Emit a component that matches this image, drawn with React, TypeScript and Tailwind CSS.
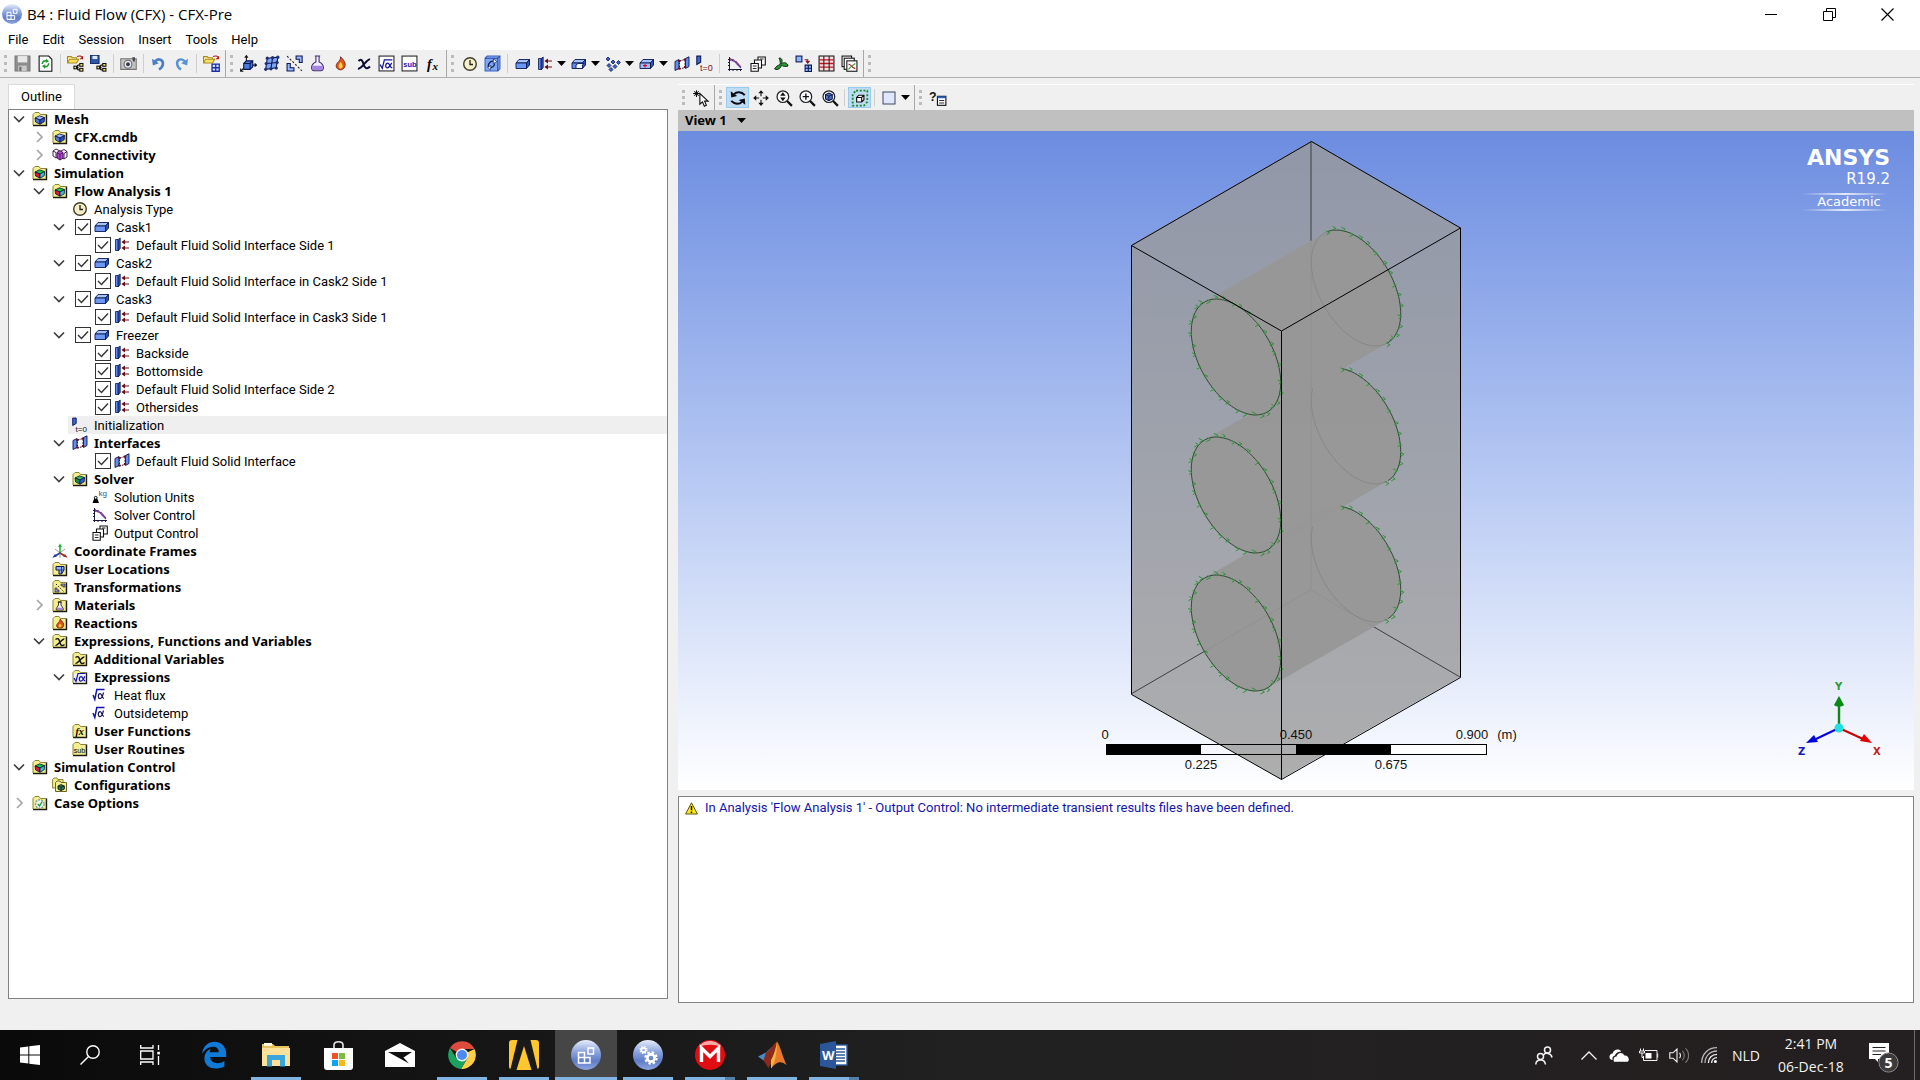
import React from 'react';

type IconFn = () => React.ReactElement;

const NAVY = '#0a1650';

interface GlyphProps {
  size?: number;
  children: React.ReactNode;
}

const Glyph: React.FC<GlyphProps> = ({ size = 16, children }) => (
  <svg width={size} height={size} viewBox="0 0 16 16" fill="none" className="shrink-0" aria-hidden="true">
    {children}
  </svg>
);

/* ---------- shared icon parts ---------- */

const Folder: React.FC<{ children?: React.ReactNode }> = ({ children }) => (
  <Glyph>
    <path d="M1 3.5 L3 1.5 H7 L8.5 3.5 H14 V14 H1 Z" fill="#f4ee8e" stroke="#8b8536" />
    <path d="M1 14.6 H14.6 V3.5" stroke="#1c1c10" strokeWidth="1.2" />
    {children}
  </Glyph>
);

const Cube: React.FC<{ top: string; left: string; right: string }> = ({ top, left, right }) => (
  <g stroke="#08104a" strokeWidth=".8" strokeLinejoin="round">
    <path d="M3 7 L7.5 4.8 L12.5 6.6 L8 9 Z" fill={top} />
    <path d="M3 7 L8 9 V13.2 L3.6 11 Z" fill={left} />
    <path d="M12.5 6.6 L8 9 V13.2 L12.2 10.8 Z" fill={right} />
  </g>
);

const OpenFolder = () => (
  <g>
    <path d="M.5 7.5 V1.5 H4 L5 2.5 H9 V4" fill="#fff3a0" stroke="#a88a20" />
    <path d="M.5 7.5 L2.5 4 H11 L9 7.5 Z" fill="#ffe45c" stroke="#a88a20" />
    <path d="M9.5 1.5 C12 .3 13.5 1 14.2 3 M14.6 1.2 V3.6 H12.2" stroke="#b01818" />
  </g>
);

const TreeNodes = () => (
  <g stroke="#111" strokeWidth="1">
    <path d="M8 12 H11 M10 9.5 V14 M10 9.5 H12 M10 14 H12" />
    <rect x="6.5" y="10.5" width="2.5" height="2.5" fill="#f3e36a" />
    <rect x="12" y="8" width="3" height="2.6" fill="#f3e36a" />
    <rect x="12" y="12.6" width="3" height="2.6" fill="#f3e36a" />
  </g>
);

/* ---------- tree and toolbar icons ---------- */

const MeshFolder: IconFn = () => <Folder><Cube top="#9db8ff" left="#5378e0" right="#2f4fb4" /></Folder>;
const SimFolder: IconFn = () => <Folder><Cube top="#1fc83a" left="#d8183c" right="#35c9c4" /></Folder>;
const SolverFolder: IconFn = () => <Folder><Cube top="#32c060" left="#178a48" right="#2a62d0" /></Folder>;

const Connectivity: IconFn = () => (
  <Glyph>
    <path d="M1 4 L4 2 L7 3.5 V9 L4 11 L1 9 Z M1 4 L4 5.5 V11 M9 4 L12 2.5 L15 4.5 V10 L12 12 L9 10 Z M15 4.5 L12 6.5 V12" fill="#fff" stroke="#30103c" strokeWidth=".9" />
    <path d="M5 5.5 L8 3.5 L11 5.5 V11 L8 13 L5 11 Z" fill="#b04ad0" stroke="#40104c" strokeWidth=".9" />
    <path d="M5 5.5 L8 7.5 L11 5.5 M8 7.5 V13" stroke="#40104c" strokeWidth=".8" />
  </Glyph>
);

const Clock: IconFn = () => (
  <Glyph>
    <circle cx="8" cy="8" r="6.3" fill="#f6f0c8" stroke="#3f3d2a" strokeWidth="1.4" />
    <path d="M8 4 V8.5 H11" stroke="#222" strokeWidth="1.3" />
  </Glyph>
);

const Domain: IconFn = () => (
  <Glyph>
    <g stroke={NAVY} strokeWidth=".9" strokeLinejoin="round">
      <path d="M1 7 L4 3.5 H14.5 L11.5 7 Z" fill="#a5c4ff" />
      <path d="M1 7 H11.5 V12.5 H1 Z" fill="#6a98f6" />
      <path d="M11.5 7 L14.5 3.5 V9 L11.5 12.5 Z" fill="#2d55b8" />
    </g>
  </Glyph>
);

const Boundary: IconFn = () => (
  <Glyph>
    <path d="M1.5 2.5 H4.2 V13.5 H1.5 Z" fill="#5f8ff2" stroke={NAVY} strokeWidth=".8" />
    <path d="M4.2 2.5 L6.2 1 V11.5 L4.2 14 Z" fill="#2d55b8" stroke={NAVY} strokeWidth=".8" />
    <path d="M9 5 H15 M9 11 H15" stroke="#6a0d12" strokeWidth="1.2" />
    <path d="M7.4 5 L11 2.4 V7.6 Z M7.4 11 L11 8.4 V13.6 Z" fill="#6a0d12" />
  </Glyph>
);

const Subdomain: IconFn = () => (
  <Glyph>
    <g stroke={NAVY} strokeWidth=".9" strokeLinejoin="round">
      <path d="M1 7 L4 3.5 H14.5 L11.5 7 Z" fill="#a5c4ff" />
      <path d="M1 7 H11.5 V12.5 H1 Z" fill="#5f8ff2" />
      <path d="M11.5 7 L14.5 3.5 V9 L11.5 12.5 Z" fill="#2d55b8" />
      <path d="M5 12.5 V9 L7 7.5 H13 L11.5 9 V12.5 Z" fill="#f4f8ff" />
    </g>
  </Glyph>
);

const SourcePoints: IconFn = () => (
  <Glyph>
    <g fill="#3c5fc8" stroke={NAVY} strokeWidth=".8">
      <path d="M3 1 L5 3 L3 5 L1 3 Z M8 4 L10 6 L8 8 L6 6 Z M13.5 4.5 L15.3 6.5 L13.5 8.5 L11.6 6.5 Z M4 7.5 L6 9.5 L4 11.5 L2 9.5 Z M10 8.5 L12 10.5 L10 12.5 L8 10.5 Z M6 11.5 L8 13.5 L6 15.5 L4 13.5 Z" />
    </g>
  </Glyph>
);

const DomainSource: IconFn = () => (
  <Glyph>
    <g stroke={NAVY} strokeWidth=".9" strokeLinejoin="round">
      <path d="M1 7 L4 3.5 H14.5 L11.5 7 Z" fill="#a5c4ff" />
      <path d="M1 7 H11.5 V12.5 H1 Z" fill="#9dbafa" />
      <path d="M11.5 7 L14.5 3.5 V9 L11.5 12.5 Z" fill="#2d55b8" />
    </g>
    <path d="M4 9.7 H8 M6 8 V11.6" stroke="#d01030" strokeWidth="1.2" />
  </Glyph>
);

const Interfaces: IconFn = () => (
  <Glyph>
    <path d="M1 5.5 L5 3.5 V12.5 L1 14.5 Z M11.5 2.5 L15 .8 V10.5 L11.5 12.5 Z" fill="#5f8ff2" stroke={NAVY} strokeWidth=".9" />
    <path d="M5.5 5 L11 3.5 V11.5 L5.5 13 Z" fill="#fff" stroke="#3a0a2a" strokeDasharray="2 1" />
    <path d="M4.3 5 H6.5 M10 3.5 H12.2 M4.3 12.5 H6.5 M10 11 H12.2" stroke="#6a0d12" strokeWidth="1.8" />
  </Glyph>
);

const InitGlyph: React.FC<{ size: number; color: string }> = ({ size, color }) => (
  <Glyph size={size}>
    <path d="M.7 1 H4.2 V6.5 L.7 8.5 Z" fill="#3a66d0" stroke={NAVY} strokeWidth=".9" />
    <text x="3.6" y="14.6" fontSize="8" fontFamily="Liberation Sans, sans-serif" fill={color}>t=0</text>
  </Glyph>
);

const Initialization: IconFn = () => <InitGlyph size={16} color="#111" />;
const InitToolbar: IconFn = () => <InitGlyph size={18} color="#7a1020" />;

const Units: IconFn = () => (
  <Glyph>
    <path d="M.5 14 L2 10 H5.5 L7 14 Z" fill="#000" />
    <circle cx="3.7" cy="8.8" r="1.4" stroke="#000" />
    <text x="6.5" y="7" fontSize="8" fontFamily="Liberation Sans, sans-serif" fill="#2a5a90">kg</text>
  </Glyph>
);

const Graph: IconFn = () => (
  <Glyph>
    <path d="M2.5 1 V15 M1 13.5 H15 M1 3.5 H2.5 M1 6.5 H2.5 M1 9.5 H2.5 M6 13.5 V15 M10 13.5 V15 M13.5 13.5 V15" stroke="#1a1a3c" />
    <path d="M3 2.5 L6 5 L9 5.5 L14 11" stroke="#a01040" strokeWidth="1.1" />
    <path d="M3 4.5 L6 3.5 L10 8 L14 12" stroke="#5048b0" strokeWidth="1.1" />
  </Glyph>
);

const Pages: IconFn = () => (
  <Glyph>
    <g fill="#fff" stroke="#111" strokeWidth="1.1">
      <path d="M8 1 H15.3 V9 H8 Z" />
      <path d="M4.5 4 H11.5 V12 H4.5 Z" />
      <path d="M1 7.5 H8.3 V15.3 H1 Z" />
      <path d="M2.8 10 H6.5 M2.8 12.5 H6.5 M10 3 H13.5" strokeWidth=".9" />
    </g>
  </Glyph>
);

const CoordFrame: IconFn = () => (
  <Glyph>
    <path d="M8 10 V2" stroke="#20b040" strokeWidth="1.6" />
    <path d="M6 4 L8 .5 L10 4 Z" fill="#20b040" />
    <path d="M8 10 L3 13" stroke="#2038b0" strokeWidth="1.6" />
    <path d="M.3 14.8 L3 11 L4.8 13.6 Z" fill="#2038b0" />
    <path d="M8 10 L13 13" stroke="#b02020" strokeWidth="1.6" />
    <path d="M15.7 14.8 L13 11 L11.2 13.6 Z" fill="#b02020" />
    <path d="M3 6 L13 14 M13 6 L4 13 M8 10 V15" stroke="#555" strokeWidth=".6" />
  </Glyph>
);

const LocationFolder: IconFn = () => (
  <Folder>
    <path d="M4 5.5 H12 V9 L9.5 13 H7 V9 H4 Z" fill="#8fb0ff" stroke={NAVY} />
    <path d="M7 9 H12 M9.5 5.5 V13" stroke={NAVY} strokeWidth=".7" />
  </Folder>
);

const TransformFolder: IconFn = () => (
  <Folder>
    <path d="M9 5 H13 V8 H11 V6.8 H9 Z M3 9 H5 V11 H7 V13 H3 Z" fill="#9a96d0" stroke="#223" strokeWidth=".7" />
    <path d="M4 5 L12 13" stroke="#222" strokeDasharray="1.5 1.5" />
  </Folder>
);

const MaterialsFolder: IconFn = () => (
  <Folder>
    <path d="M6.5 5 V8 L4.3 11.5 V13 H11.2 V11.5 L9 8 V5 Z" fill="#f3ecff" stroke="#111" strokeWidth=".8" />
    <path d="M5.8 5 H9.8" stroke="#111" />
    <path d="M5 10.8 H10.5 V12.4 H5 Z" fill="#a77fe0" />
  </Folder>
);

const ReactionsFolder: IconFn = () => (
  <Folder>
    <path d="M8 4.2 C12.5 8 12 10.5 11 12 C9.8 13.6 6.2 13.6 5 12 C3.8 10 5.5 8.5 6.5 7.5 C7.5 6.4 8 5.5 8 4.2 Z" fill="#d9531e" stroke="#7a1a08" strokeWidth=".8" />
    <path d="M8 8.5 C10 10.5 9.8 12.4 8 12.4 C6.2 12.4 6.2 10.5 8 8.5 Z" fill="#ffd63a" />
  </Folder>
);

const VariableFolder: IconFn = () => (
  <Folder>
    <path d="M3.5 6.5 C6 4.5 7 6 7.8 9 C8.6 12.5 10 13.5 12.5 11.5 M12.3 6 C10.5 5.5 5.5 13 3.5 12.3" stroke="#111" strokeWidth="1.4" />
  </Folder>
);

const SqrtAlpha = () => (
  <path d="M2 9 L4 12.5 L6 4.5 H13.5 M13 7.5 C11.5 9 11 12.2 8.8 12.2 C6.6 12.2 6.8 7.6 9.2 7.6 C11 7.6 11 12 13.4 12" stroke="#1414a0" strokeWidth="1.2" />
);

const ExpressionFolder: IconFn = () => (
  <Folder>
    <rect x="2" y="4.5" width="11.5" height="9" fill="#eef" />
    <SqrtAlpha />
  </Folder>
);

const Expression: IconFn = () => (
  <Glyph>
    <path d="M1 8 L2.8 12.5 L4.8 2.5 H12.5" stroke="#1414b0" strokeWidth="1.5" />
    <path d="M11.5 5.5 C11 7 10.5 11.6 8 11.6 C5.6 11.6 5.8 6.6 8.2 6.6 C10 6.6 10 11.5 12 11.5" stroke="#141450" strokeWidth="1.2" />
  </Glyph>
);

const FunctionFolder: IconFn = () => (
  <Folder>
    <text x="3.5" y="12.2" fontSize="10" fontWeight="700" fontStyle="italic" fontFamily="Liberation Serif, serif" fill="#000">fx</text>
  </Folder>
);

const RoutineFolder: IconFn = () => (
  <Folder>
    <text x="1.8" y="12" fontSize="7" fontFamily="Liberation Sans, sans-serif" fill="#000">sub</text>
  </Folder>
);

const ConfigFolder: IconFn = () => (
  <Glyph>
    <path d="M.6 2.5 L2 1 H5 L6 2.5 H11 V11 H.6 Z" fill="#f4ee8e" stroke="#8b8536" />
    <path d="M3.5 5.5 L5 4 H8 L9 5.5 H14.5 V14.5 H3.5 Z" fill="#f4ee8e" stroke="#6b6526" />
    <path d="M6 9 L9 7.6 L12.3 9 V12 L9 13.5 L6 12 Z" fill="#2a8a60" stroke="#111" strokeWidth=".9" />
    <path d="M6 9 L9 10.3 L12.3 9 M9 10.3 V13.5" stroke="#111" strokeWidth=".8" />
  </Glyph>
);

const CaseFolder: IconFn = () => (
  <Folder>
    <circle cx="7.8" cy="9" r="4.3" fill="#eef6ee" stroke="#7aa09a" strokeDasharray="2 1" strokeWidth="1.4" />
    <path d="M5.8 9 L7.6 11 L10.2 6.5" stroke="#159a30" strokeWidth="1.3" />
  </Folder>
);

const Save: IconFn = () => (
  <Glyph size={17}>
    <path d="M1 1 H15 V15 H1 Z" fill="#8d8d8d" stroke="#777" />
    <rect x="3.5" y="1" width="9" height="6" fill="#e8e8e8" />
    <rect x="4" y="10" width="8" height="5" fill="#c9c9c9" />
    <rect x="5" y="11" width="2" height="4" fill="#6d6d6d" />
  </Glyph>
);

const RefreshPage: IconFn = () => (
  <Glyph size={17}>
    <path d="M2 1 H11 L14 4 V15.3 H2 Z" fill="#fff" stroke="#111" />
    <path d="M5 8.5 C5 6 7 5 9 5.6 M11 7.8 C11 10.4 9 11.4 7 10.8" stroke="#1f9a2d" strokeWidth="1.5" />
    <path d="M8.5 3.4 L11.3 6 L8.2 7.6 Z M7.5 13 L4.7 10.4 L7.8 8.8 Z" fill="#1f9a2d" />
  </Glyph>
);

const LoadTree: IconFn = () => <Glyph size={17}><OpenFolder /><TreeNodes /></Glyph>;

const SaveTree: IconFn = () => (
  <Glyph size={17}>
    <path d="M.5 .5 H8.5 V8 H.5 Z" fill="#2f56a8" stroke="#15306a" />
    <rect x="2.3" y=".8" width="4.6" height="3" fill="#dfe8fb" />
    <TreeNodes />
  </Glyph>
);

const Camera: IconFn = () => (
  <Glyph size={17}>
    <path d="M.7 3.5 H15.3 V13.5 H.7 Z" fill="#c3c3c3" stroke="#777" />
    <circle cx="7.5" cy="8.7" r="3.7" fill="#e8e8e8" stroke="#666" />
    <circle cx="7.5" cy="8.7" r="1.8" fill="#2b3d55" />
    <path d="M11.5 2 H14 V6 H12.3 Z" fill="#444" />
  </Glyph>
);

const Undo: IconFn = () => (
  <Glyph size={15}>
    <path d="M4 6 C8 1.5 13.5 4 12.6 9 C12.2 11.3 10.8 13 8.5 14.3" stroke="#4a7fc4" strokeWidth="2.8" />
    <path d="M1 3 L2 10.2 L8.4 7.6 Z" fill="#4a7fc4" />
  </Glyph>
);

const Redo: IconFn = () => (
  <Glyph size={15}>
    <path d="M12 6 C8 1.5 2.5 4 3.4 9 C3.8 11.3 5.2 13 7.5 14.3" stroke="#5b92d4" strokeWidth="2.6" />
    <path d="M15 3 L14 10.2 L7.6 7.6 Z" fill="#5b92d4" />
  </Glyph>
);

const FolderGrid: IconFn = () => (
  <Glyph size={17}>
    <OpenFolder />
    <path d="M8.5 8.5 H15.3 V15.3 H8.5 Z M8.5 12 H15.3 M12 8.5 V15.3" fill="#cfe0ff" stroke="#1a2aa8" strokeWidth="1.2" />
  </Glyph>
);

const RegionAxes: IconFn = () => (
  <Glyph size={17}>
    <path d="M6 9 V1 M4.5 2.6 L6 .6 L7.5 2.6 M10 9.5 H15.5 M13.8 8 L15.6 9.5 L13.8 11 M4 12 L.8 15 M.6 12.6 V15.3 H3.2" stroke="#111" />
    <path d="M3.5 8 L6 5.5 H12 V11 L9.5 13.5 H3.5 Z" fill="#4c7ae0" stroke={NAVY} />
    <path d="M3.5 8 H9.5 V13.5 M9.5 8 L12 5.5" stroke={NAVY} />
  </Glyph>
);

const MeshRegion: IconFn = () => (
  <Glyph size={17}>
    <path d="M4 3 L14 2 L12.5 12 L2.5 13.5 Z" fill="#7fa4f5" stroke={NAVY} />
    <path d="M3.3 8 L13.3 7 M9 2.5 L7.5 13" stroke={NAVY} />
    <g fill="#1c2f70">
      <circle cx="4" cy="3" r="1.5" /><circle cx="9" cy="2.5" r="1.5" /><circle cx="14" cy="2" r="1.5" />
      <circle cx="3" cy="8" r="1.5" /><circle cx="13.3" cy="7" r="1.5" /><circle cx="2.5" cy="13.5" r="1.5" />
      <circle cx="7.5" cy="13" r="1.5" /><circle cx="12.5" cy="12.3" r="1.5" />
    </g>
  </Glyph>
);

const Transform: IconFn = () => (
  <Glyph size={17}>
    <path d="M9.5 1 H15.2 V7 H12.5 V4 H9.5 Z M1 8 H4 V12 H7.5 V15 H1 Z" fill="#9ab8ff" stroke={NAVY} />
    <path d="M1 1 L15 15" stroke="#222" strokeDasharray="2 1.6" />
  </Glyph>
);

const Flask: IconFn = () => (
  <Glyph size={17}>
    <path d="M5.5 1 H10.5 M6.5 1 V6.5 C1.5 8.5 1.2 14.8 5 14.8 H11 C14.8 14.8 14.5 8.5 9.5 6.5 V1" fill="#f3eeff" stroke="#3a2a70" />
    <path d="M3 10 H13 C13.6 13 12.5 14 11 14 H5 C3.4 14 2.6 13 3 10 Z" fill="#a583e6" />
  </Glyph>
);

const Flame: IconFn = () => (
  <Glyph size={15}>
    <path d="M8 .8 C13.5 6 14 9.5 11.8 12.8 C10 15.4 6 15.4 4.2 12.8 C2.4 10 4 8 6 6 C7.4 4.4 8.3 3 8 .8 Z" fill="#e0561c" stroke="#701808" strokeWidth=".9" />
    <path d="M8 6.5 C11 9.5 10.8 13.2 8 13.4 C5.3 13.2 5.5 9.8 8 6.5 Z" fill="#ffd84a" />
  </Glyph>
);

const Variable: IconFn = () => (
  <Glyph size={16}>
    <path d="M2.5 5 C5 2.5 6.5 4 7.5 8 C8.6 12.5 11 13.5 14 10.5 M14 3.6 C11 2 6 13.5 2 12.6" stroke="#0c0c30" strokeWidth="2" />
  </Glyph>
);

const SqrtBox: IconFn = () => (
  <Glyph size={17}>
    <rect x="1" y="1" width="14" height="14" fill="#fff" stroke="#222" />
    <SqrtAlpha />
  </Glyph>
);

const SubBox: IconFn = () => (
  <Glyph size={17}>
    <rect x="1" y="1" width="14" height="14" fill="#fff" stroke="#222" />
    <text x="2.2" y="11.2" fontSize="7" fontWeight="700" fontFamily="Liberation Sans, sans-serif" fill="#1414b0">sub</text>
  </Glyph>
);

const Fx: IconFn = () => (
  <Glyph size={16}>
    <text x="2" y="12.5" fontSize="14" fontWeight="700" fontStyle="italic" fontFamily="Liberation Serif, serif" fill="#000">f</text>
    <text x="7.5" y="14" fontSize="11" fontWeight="700" fontStyle="italic" fontFamily="Liberation Serif, serif" fill="#000">x</text>
  </Glyph>
);

const TimeStep: IconFn = () => (
  <Glyph size={17}>
    <path d="M1 3 L3 1 H15 V13 L13 15 H1 Z" fill="#7fa6f6" stroke="#3a62c0" />
    <path d="M1 3 H13 V15 M13 3 L15 1" stroke="#2a4a98" />
    <path d="M4 11 C4 7 7 5 10 6 M10 8 C9.5 11 7.5 12 5 12" stroke="#0b1c50" strokeWidth="1.2" />
    <path d="M9 3.5 L12 6.4 L8.6 8 Z M6 14 L3.4 11.5 L6.6 10 Z" fill="#fff" stroke="#0b1c50" strokeWidth=".6" />
  </Glyph>
);

const Propeller: IconFn = () => (
  <Glyph size={16}>
    <path d="M6 2 C9.5 2 9.5 5 8.5 7.5 C11 6 14.5 6.5 15 10 C12 10.8 10 10.4 8.4 9 C8 12 5 14.6 1.6 13 C2.6 10.6 5 9.4 7.2 8.4 C7.5 6 7 4 6 2 Z" fill="#2a9a36" stroke="#0a2a0e" />
  </Glyph>
);

const SquaresLink: IconFn = () => (
  <Glyph size={17}>
    <rect x="1" y="1" width="5.5" height="5.5" fill="#8fb4ff" stroke={NAVY} />
    <path d="M9.5 9.5 H15.5 V15.5 H9.5 Z M9.5 12.5 H15.5 M12.5 9.5 V15.5" fill="#8fb4ff" stroke={NAVY} />
    <path d="M9 4.5 H12 V7 M10.3 5.6 L12 7.6 L13.7 5.6" stroke="#7a1020" />
  </Glyph>
);

const TableGrid: IconFn = () => (
  <Glyph size={17}>
    <path d="M1 1 H15 V15 H1 Z" fill="#f6dcdc" stroke="#111" />
    <path d="M1 4.5 H15 M1 8 H15 M1 11.5 H15" stroke="#c01828" strokeWidth="1.2" />
    <path d="M5.5 1 V15 M10.5 1 V15" stroke="#222" />
  </Glyph>
);

const PagesChart: IconFn = () => (
  <Glyph size={17}>
    <g fill="#fff" stroke="#111">
      <rect x="1" y="1" width="9" height="10" />
      <rect x="3" y="3" width="9.5" height="10.5" />
      <rect x="5.5" y="5.5" width="9.5" height="9.8" />
    </g>
    <path d="M7 8.5 L9 9.5 L11 11.5 L13.5 13" stroke="#b01828" />
    <path d="M7 13.5 L9.5 11 L13.5 8" stroke="#2a9a36" />
  </Glyph>
);

const PickCursor: IconFn = () => (
  <Glyph size={18}>
    <path d="M4 1 V7 M1 4 H7 M2 2 L6 6 M6 2 L2 6" stroke="#111" strokeWidth=".9" />
    <path d="M7 4 V13.5 L9.3 11.4 L11 15.3 L12.8 14.5 L11.2 10.8 H14.3 Z" fill="#fff" stroke="#111" />
  </Glyph>
);

const Rotate: IconFn = () => (
  <Glyph size={18}>
    <path d="M4.5 4.6 C6.5 2.4 11 2.2 14 5.4 M11.5 11.4 C9.5 13.6 5 13.8 2 10.6" stroke="#0b0b14" strokeWidth="1.8" />
    <path d="M1.5 2 L2 7.6 L7.3 6.2 Z M14.5 14 L14 8.4 L8.7 9.8 Z" fill="#0b0b14" />
  </Glyph>
);

const Pan: IconFn = () => (
  <Glyph size={18}>
    <path d="M8 1 L10.4 3.8 H5.6 Z M8 15 L10.4 12.2 H5.6 Z M1 8 L3.8 5.6 V10.4 Z M15 8 L12.2 5.6 V10.4 Z" fill="#111" />
    <path d="M8 3 V13 M3 8 H13" stroke="#111" strokeDasharray="3.4 3.2" />
  </Glyph>
);

const Lens: React.FC<{ children: React.ReactNode }> = ({ children }) => (
  <Glyph size={18}>
    <circle cx="7" cy="6.8" r="5.2" fill="#f7f9fc" stroke="#222" strokeWidth="1.1" />
    <path d="M10.8 10.6 L15 15" stroke="#111" strokeWidth="2" />
    {children}
  </Glyph>
);

const ZoomDrag: IconFn = () => (
  <Lens><path d="M7 2.8 L9.4 6 H4.6 Z M7 10.8 L9.4 7.6 H4.6 Z" fill="#111" /></Lens>
);
const ZoomBox: IconFn = () => <Lens><path d="M7 4 V9.6 M4.2 6.8 H9.8" stroke="#111" strokeWidth="1.2" /></Lens>;
const ZoomFit: IconFn = () => (
  <Lens>
    <path d="M4 5 L7 3.6 L10 5 V8.8 L7 10.4 L4 8.8 Z" fill="#5672b8" stroke={NAVY} strokeWidth=".9" />
    <path d="M4 5 L7 6.4 L10 5 M7 6.4 V10.4" stroke={NAVY} strokeWidth=".8" />
  </Lens>
);

const Highlight: IconFn = () => (
  <Glyph size={18}>
    <path d="M4.5 1.5 H14.5 V11.5 L11.5 14.8 H1.5 V4.5 Z" stroke="#168a2c" strokeWidth="1.6" strokeDasharray="1.8 1.5" />
    <path d="M5 7.5 L7 5.5 H11.5 V9.5 L9.5 11.5 H5 Z M5 7.5 H9.5 V11.5 M9.5 7.5 L11.5 5.5" fill="#fff" stroke="#111" />
  </Glyph>
);

const ViewSquare: IconFn = () => (
  <Glyph size={16}>
    <rect x="2" y="2" width="12" height="12" fill="#dfe8fa" stroke="#3c4660" />
  </Glyph>
);

const WhatsThis: IconFn = () => (
  <Glyph size={18}>
    <text x="0" y="10.5" fontSize="11" fontWeight="700" fontFamily="Liberation Sans, sans-serif" fill="#111">?</text>
    <rect x="7.5" y="6.5" width="7.5" height="8" fill="#fff" stroke="#111" />
    <path d="M7.5 7.4 H15" stroke="#2a60c0" strokeWidth="1.6" />
    <path d="M9 10.2 H13.5 M9 12.4 H13.5" stroke="#333" strokeWidth=".9" />
  </Glyph>
);

const SolverApp: React.FC<{ size: number; id: string; children: React.ReactNode }> = ({ size, id, children }) => (
  <svg width={size} height={size} viewBox="0 0 30 30" fill="none" className="shrink-0" aria-hidden="true">
    <defs>
      <linearGradient id={id} x1="0" y1="0" x2="0" y2="1">
        <stop offset="0" stopColor="#e8edfa" />
        <stop offset=".4" stopColor="#8aa4de" />
        <stop offset=".7" stopColor="#5e7cc8" />
        <stop offset="1" stopColor="#8fa6e2" />
      </linearGradient>
    </defs>
    <circle cx="15" cy="15" r="15" fill={`url(#${id})`} />
    {children}
  </svg>
);

const PreMark = () => (
  <path d="M7.5 12.5 H13.5 V23 H7.5 Z M7.5 17.5 H19 V23 H7.5 M17 8 H22.5 V14 H17 Z" stroke="#fff" strokeWidth="1.5" />
);

/* ---------- toolbars ---------- */

interface Tool {
  name: string;
  icon: IconFn;
  menu?: boolean;
  active?: boolean;
}

type ToolEntry = Tool | '|';

const fileTools: ToolEntry[] = [
  { name: 'Save Case', icon: Save },
  { name: 'Refresh', icon: RefreshPage },
  '|',
  { name: 'Import CCL', icon: LoadTree },
  { name: 'Export CCL', icon: SaveTree },
  '|',
  { name: 'Save Picture', icon: Camera },
  '|',
  { name: 'Undo', icon: Undo },
  { name: 'Redo', icon: Redo },
  '|',
  { name: 'Import Mesh', icon: FolderGrid },
];

const insertTools: ToolEntry[] = [
  { name: 'Coordinate Frame', icon: RegionAxes },
  { name: 'Mesh Region', icon: MeshRegion },
  { name: 'Transform Mesh', icon: Transform },
  { name: 'Material', icon: Flask },
  { name: 'Reaction', icon: Flame },
  { name: 'Additional Variable', icon: Variable },
  { name: 'Expression', icon: SqrtBox },
  { name: 'User Routine', icon: SubBox },
  { name: 'User Function', icon: Fx },
];

const physicsTools: ToolEntry[] = [
  { name: 'Analysis Type', icon: Clock },
  { name: 'Timestep', icon: TimeStep },
  '|',
  { name: 'Domain', icon: Domain },
  { name: 'Boundary', icon: Boundary, menu: true },
  { name: 'Subdomain', icon: Subdomain, menu: true },
  { name: 'Source Point', icon: SourcePoints, menu: true },
  { name: 'Domain Source', icon: DomainSource, menu: true },
  { name: 'Domain Interface', icon: Interfaces },
  { name: 'Global Initialization', icon: InitToolbar },
  '|',
  { name: 'Solver Control', icon: Graph },
  { name: 'Output Control', icon: Pages },
  { name: 'Turbo Mode', icon: Propeller },
  { name: 'Mesh Adaption', icon: SquaresLink },
  { name: 'Expert Parameters', icon: TableGrid },
  { name: 'Execution Control', icon: PagesChart },
];

const selectTools: ToolEntry[] = [{ name: 'Select', icon: PickCursor }];

const viewTools: ToolEntry[] = [
  { name: 'Rotate', icon: Rotate, active: true },
  { name: 'Pan', icon: Pan },
  { name: 'Zoom', icon: ZoomDrag },
  { name: 'Zoom Box', icon: ZoomBox },
  { name: 'Fit View', icon: ZoomFit },
  '|',
  { name: 'Highlighting', icon: Highlight, active: true },
  '|',
  { name: 'Viewport Layout', icon: ViewSquare, menu: true },
];

const Grip = () => (
  <span className="mx-[4px] my-[5px] w-[3px] shrink-0 border-l-[3px] border-dotted border-[#bcbcbc]" />
);

const Caret = () => (
  <svg width="9" height="5" viewBox="0 0 9 5" aria-hidden="true"><path d="M0 0 H9 L4.5 5 Z" fill="#000" /></svg>
);

const Toolbar: React.FC<{ label: string; tools: ToolEntry[] }> = ({ label, tools }) => (
  <div role="toolbar" aria-label={label} className="flex items-stretch border-r border-[#a8a8a8] pr-[2px]">
    <Grip />
    {tools.map((tool, i) => {
      if (tool === '|') {
        return <span key={i} className="mx-[3px] my-[4px] w-px bg-[#cfcfcf]" />;
      }
      const Icon = tool.icon;
      return (
        <button
          key={i}
          type="button"
          aria-label={tool.name}
          className={
            tool.active
              ? 'my-[2px] flex w-[23px] items-center justify-center border border-[#99cbee] bg-[#bfdcf2]'
              : tool.menu
                ? 'flex w-[34px] items-center justify-between pr-[2px] pl-[3px]'
                : 'flex w-[23px] items-center justify-center'
          }
        >
          <Icon />
          {tool.menu && <Caret />}
        </button>
      );
    })}
  </div>
);

/* ---------- outline tree ---------- */

interface TreeItem {
  level: number;
  text: string;
  icon: IconFn;
  bold?: boolean;
  open?: boolean;
  closed?: boolean;
  check?: boolean;
  selected?: boolean;
}

const items: TreeItem[] = [
  { level: 0, text: 'Mesh', icon: MeshFolder, bold: true, open: true },
  { level: 1, text: 'CFX.cmdb', icon: MeshFolder, bold: true, closed: true },
  { level: 1, text: 'Connectivity', icon: Connectivity, bold: true, closed: true },
  { level: 0, text: 'Simulation', icon: SimFolder, bold: true, open: true },
  { level: 1, text: 'Flow Analysis 1', icon: SimFolder, bold: true, open: true },
  { level: 2, text: 'Analysis Type', icon: Clock },
  { level: 2, text: 'Cask1', icon: Domain, check: true, open: true },
  { level: 3, text: 'Default Fluid Solid Interface Side 1', icon: Boundary, check: true },
  { level: 2, text: 'Cask2', icon: Domain, check: true, open: true },
  { level: 3, text: 'Default Fluid Solid Interface in Cask2 Side 1', icon: Boundary, check: true },
  { level: 2, text: 'Cask3', icon: Domain, check: true, open: true },
  { level: 3, text: 'Default Fluid Solid Interface in Cask3 Side 1', icon: Boundary, check: true },
  { level: 2, text: 'Freezer', icon: Domain, check: true, open: true },
  { level: 3, text: 'Backside', icon: Boundary, check: true },
  { level: 3, text: 'Bottomside', icon: Boundary, check: true },
  { level: 3, text: 'Default Fluid Solid Interface Side 2', icon: Boundary, check: true },
  { level: 3, text: 'Othersides', icon: Boundary, check: true },
  { level: 2, text: 'Initialization', icon: Initialization, selected: true },
  { level: 2, text: 'Interfaces', icon: Interfaces, bold: true, open: true },
  { level: 3, text: 'Default Fluid Solid Interface', icon: Interfaces, check: true },
  { level: 2, text: 'Solver', icon: SolverFolder, bold: true, open: true },
  { level: 3, text: 'Solution Units', icon: Units },
  { level: 3, text: 'Solver Control', icon: Graph },
  { level: 3, text: 'Output Control', icon: Pages },
  { level: 1, text: 'Coordinate Frames', icon: CoordFrame, bold: true },
  { level: 1, text: 'User Locations', icon: LocationFolder, bold: true },
  { level: 1, text: 'Transformations', icon: TransformFolder, bold: true },
  { level: 1, text: 'Materials', icon: MaterialsFolder, bold: true, closed: true },
  { level: 1, text: 'Reactions', icon: ReactionsFolder, bold: true },
  { level: 1, text: 'Expressions, Functions and Variables', icon: VariableFolder, bold: true, open: true },
  { level: 2, text: 'Additional Variables', icon: VariableFolder, bold: true },
  { level: 2, text: 'Expressions', icon: ExpressionFolder, bold: true, open: true },
  { level: 3, text: 'Heat flux', icon: Expression },
  { level: 3, text: 'Outsidetemp', icon: Expression },
  { level: 2, text: 'User Functions', icon: FunctionFolder, bold: true },
  { level: 2, text: 'User Routines', icon: RoutineFolder, bold: true },
  { level: 0, text: 'Simulation Control', icon: SimFolder, bold: true, open: true },
  { level: 1, text: 'Configurations', icon: ConfigFolder, bold: true },
  { level: 0, text: 'Case Options', icon: CaseFolder, bold: true, closed: true },
];

const indents = ['pl-0', 'pl-[20px]', 'pl-[40px]', 'pl-[60px]'];

const TreeRow: React.FC<{ item: TreeItem; id: string }> = ({ item, id }) => {
  const Icon = item.icon;
  return (
    <li className={`flex h-[18px] items-center ${indents[item.level]}`}>
      <span className="flex w-[19px] shrink-0 justify-center">
        {(item.open || item.closed) && (
          <button type="button" aria-label={`Toggle ${item.text}`} aria-expanded={!!item.open}>
            <svg width="12" height="12" viewBox="0 0 12 12" fill="none">
              {item.open
                ? <path d="M1 3.5 L6 8.5 L11 3.5" stroke="#404040" strokeWidth="1.7" />
                : <path d="M4 1 L9 6 L4 11" stroke="#a6a6a6" strokeWidth="1.7" />}
            </svg>
          </button>
        )}
      </span>
      <div className={`flex h-full flex-1 items-center pl-px ${item.selected ? 'bg-[#efefef]' : ''}`}>
        {item.check && (
          <span className="ml-[6px] grid h-[16px] w-[16px] shrink-0 place-items-center">
            <input id={id} type="checkbox" defaultChecked className="col-start-1 row-start-1 h-[16px] w-[16px] appearance-none border border-[#333] bg-white" />
            <svg width="12" height="10" viewBox="0 0 12 10" fill="none" className="pointer-events-none col-start-1 row-start-1">
              <path d="M1 5 L4.5 8.5 L11 1.5" stroke="#333" strokeWidth="1.4" />
            </svg>
          </span>
        )}
        <label htmlFor={item.check ? id : undefined} className="flex items-center gap-[6px] pl-[3px] text-[13px] leading-[17px] whitespace-nowrap">
          <Icon />
          <span className={item.bold ? "font-['Noto_Sans',sans-serif] font-bold" : "pt-px font-['Roboto',sans-serif]"}>{item.text}</span>
        </label>
      </div>
    </li>
  );
};

/* ---------- 3D viewport ---------- */

// A circle lying in the front-left plane of the box, seen in projection.
const rimPoint = (cx: number, cy: number, deg: number, grow = 1): [number, number] => {
  const t = (deg * Math.PI) / 180;
  return [cx + grow * 44.7 * Math.cos(t), cy + grow * (25.6 * Math.cos(t) + 52 * Math.sin(t))];
};

const rimPath = (cx: number, cy: number, from: number, to: number) => {
  const pts: string[] = [];
  for (let d = from; d <= to; d += 4) {
    const [x, y] = rimPoint(cx, cy, d);
    pts.push(`${x.toFixed(1)} ${y.toFixed(1)}`);
  }
  return 'M' + pts.join(' L');
};

const ticksPath = (cx: number, cy: number, from: number, to: number) => {
  let d = '';
  let i = 0;
  for (let a = from; a <= to; a += 9 + ((i * 7) % 5)) {
    const [x, y] = rimPoint(cx, cy, a, i % 3 === 0 ? 0.98 : 1.03);
    const k = i % 2 === 0 ? 1 : -1;
    d += `M${(x - 2).toFixed(1)} ${(y - 2 * k).toFixed(1)} l4 ${2 * k} l-3 ${2 * k} `;
    i += 1;
  }
  return d;
};

const casks = [
  { front: [558, 226], back: [678, 157], start: -130, hiddenEnd: 230 },
  { front: [558, 364], back: [678, 295], start: -108, hiddenEnd: 197 },
  { front: [558, 502], back: [678, 433], start: -108, hiddenEnd: 197 },
];

const Scene = () => (
  <svg viewBox="0 0 1236 659" className="block h-full w-full" role="img" aria-label="Freezer model">
    <path d="M633 10 L782 97 V546 L603 648 L453 563 V114 Z" fill="#9a9a9a" fillOpacity=".8" />
    <path d="M633 10 V110 M453 563 L527 520 M782 546 L696 496" fill="none" stroke="#3c3f40" />
    {casks.map(({ front, back }) => {
      const [fx, fy] = front;
      const [bx, by] = back;
      return (
        <path
          key={fy}
          d={`M${fx - 31.6} ${fy - 55} L${bx - 31.6} ${by - 55} ${rimPath(bx, by, -135, 45).replace('M', 'L')} L${fx + 31.6} ${fy + 55} ${rimPath(fx, fy, 45, 225).replace('M', 'L')} Z`}
          fill="#989797"
          fillOpacity=".93"
        />
      );
    })}
    <path d="M633 110 V459 M527 520 L633 459 L696 496" fill="none" stroke="#8c8c8c" strokeOpacity=".6" />
    {casks.map(({ front, back, start, hiddenEnd }) => (
      <g key={front[1]} fill="none">
        <path d={rimPath(back[0], back[1], 46, hiddenEnd)} stroke="#858985" />
        <path d={rimPath(back[0], back[1], start, 46)} stroke="#2e4a32" />
        <path d={ticksPath(back[0], back[1], start, 50)} stroke="#2f9438" />
        <path d={rimPath(front[0], front[1], 0, 360)} stroke="#2e4a32" />
        <path d={ticksPath(front[0], front[1], 0, 352)} stroke="#2f9438" />
      </g>
    ))}
    <path
      d="M633.5 10.5 L782.5 97 L603.5 200 L453.5 114.5 Z M453.5 114.5 V563.5 L603.5 648.5 L782.5 546.5 V97 M603.5 200 V648.5"
      fill="none"
      stroke="#000"
    />
    <g>
      <rect x="428" y="613" width="95" height="10" fill="#000" />
      <rect x="618" y="613" width="95" height="10" fill="#000" />
      <rect x="713" y="613" width="95" height="10" fill="#fff" />
      <rect x="428.5" y="613.5" width="380" height="10" fill="none" stroke="#000" />
    </g>
    <g fontFamily="Liberation Sans, Arial, sans-serif" fontSize="13" fill="#111" textAnchor="middle">
      <text x="427" y="608">0</text>
      <text x="618" y="608">0.450</text>
      <text x="794" y="608">0.900</text>
      <text x="829" y="608">(m)</text>
      <text x="523" y="638">0.225</text>
      <text x="713" y="638">0.675</text>
    </g>
  </svg>
);

const Triad = () => (
  <svg width="86" height="78" viewBox="0 0 86 78" className="absolute right-[32px] bottom-[32px]" fill="none" aria-hidden="true">
    <path d="M43 48 V18" stroke="#0a8a14" strokeWidth="2.4" />
    <path d="M38 25 L43 16 L48 25 C46 27 40 27 38 25 Z" fill="#0a8a14" />
    <path d="M43 48 L20 59" stroke="#0000e0" strokeWidth="2" />
    <path d="M10 63 L18 55 L22 62 Z" fill="#0000e0" />
    <path d="M43 48 L67 59" stroke="#c00" strokeWidth="2" />
    <path d="M76 63 L68 54 L64 61 Z" fill="#e00000" />
    <circle cx="43" cy="48" r="4.5" fill="#20e0e0" />
    <g fontFamily="DejaVu Sans, sans-serif" fontSize="10" fontWeight="700">
      <text x="39" y="10" fill="#2c9a34">Y</text>
      <text x="2" y="75" fill="#1818b8">Z</text>
      <text x="77" y="75" fill="#c82020">X</text>
    </g>
  </svg>
);

const Viewport = () => (
  <div className="relative min-h-0 flex-1 overflow-hidden bg-linear-to-b from-[#6c8ce0] to-white">
    <Scene />
    <div className="absolute top-[15px] right-[24px] flex flex-col items-end font-['DejaVu_Sans',sans-serif] text-white">
      <span className="text-[22px] leading-[24px] font-bold">ANSYS</span>
      <span className="text-[15px] leading-[18px]">R19.2</span>
      <div className="mt-[5px] flex flex-col pr-[2px]">
        <span className="h-[2px] w-[86px] bg-linear-to-r from-transparent via-white/80 to-transparent" />
        <span className="pl-[8px] text-center text-[13px] leading-[14px]">Academic</span>
        <span className="h-[2px] w-[86px] bg-linear-to-r from-transparent via-white/80 to-transparent" />
      </div>
    </div>
    <Triad />
  </div>
);

/* ---------- taskbar ---------- */

interface TaskApp {
  name: string;
  icon: React.ReactElement;
  running?: boolean;
  stacked?: boolean;
  active?: boolean;
}

const apps: TaskApp[] = [
  {
    name: 'Edge',
    icon: (
      <svg width="26" height="28" viewBox="0 0 26 28" fill="none">
        <path d="M1 13 C2 4.5 8 .8 13.5 .8 C20.5 .8 25.2 6 25.2 12.6 V16 H9.2 C9.6 23 18 23.5 23.4 20.2 V25.4 C14 30 3.4 27 3.4 17.5 C3.4 12.5 6.4 9.3 9.6 8 C8.8 9.4 8.8 10.8 8.8 11.2 H17.8 C17.8 7.8 15.8 5.8 12 5.8 C7.4 5.8 3.2 9 1 13 Z" fill="#0f7bd6" />
      </svg>
    ),
  },
  {
    name: 'File Explorer',
    running: true,
    icon: (
      <svg width="28" height="24" viewBox="0 0 28 24" fill="none">
        <path d="M0 1 H11 L13 3 H27 V22 H0 Z" fill="#e8c35c" />
        <path d="M2 0 H10 V3 H2 Z" fill="#fdf6dc" />
        <path d="M0 5 H28 V23 H0 Z" fill="#fbe19a" />
        <path d="M5 23.5 V12 H23 V23.5 H18 V17 H10 V23.5 Z" fill="#3aa5dc" />
      </svg>
    ),
  },
  {
    name: 'Microsoft Store',
    icon: (
      <svg width="29" height="30" viewBox="0 0 29 30" fill="none">
        <path d="M10 10 V5 C10 .6 19 .6 19 5 V10" stroke="#e6e6e6" strokeWidth="1.6" />
        <path d="M0 8 H29 V27 Q29 30 26 30 H3 Q0 30 0 27 Z" fill="#fff" />
        <rect x="8" y="13" width="6" height="6" fill="#f05323" />
        <rect x="15" y="13" width="6" height="6" fill="#7fbb42" />
        <rect x="8" y="20" width="6" height="6" fill="#08a6ef" />
        <rect x="15" y="20" width="6" height="6" fill="#fdb813" />
      </svg>
    ),
  },
  {
    name: 'Mail',
    icon: (
      <svg width="30" height="24" viewBox="0 0 30 24" fill="none">
        <path d="M0 8 L15 0 L30 8 V24 H0 Z" fill="#fff" />
        <path d="M3 9 H27 L18.5 14.5 L24 20.5 L14 15 Z" fill="#101010" />
      </svg>
    ),
  },
  {
    name: 'Chrome',
    running: true,
    icon: (
      <svg width="28" height="28" viewBox="0 0 28 28" fill="none">
        <path d="M14 14 L2 7 A14 14 0 0 1 26.5 8 H14 Z" fill="#dd4b3e" />
        <path d="M14 14 L26.5 8 A14 14 0 0 1 13 28 L19.5 17 Z" fill="#ffce44" />
        <path d="M14 14 L19.5 17 L13 28 A14 14 0 0 1 2 7 L8.5 17.5 Z" fill="#1aa260" />
        <circle cx="14" cy="14" r="6.4" fill="#f2f2f2" />
        <circle cx="14" cy="14" r="5" fill="#4a8af4" />
      </svg>
    ),
  },
  {
    name: 'ANSYS Workbench',
    running: true,
    icon: (
      <svg width="30" height="30" viewBox="0 0 30 30" fill="none">
        <path d="M3 0 H27 Q30 0 30 3 V27 Q30 30 27 30 H3 Q0 30 0 27 V3 Q0 0 3 0 Z" fill="#1a1a1a" />
        <path d="M3 0 H8.5 L1.5 29 Q0 28.5 0 27 V3 Q0 0 3 0 Z M27 0 H21.5 L28.5 29 Q30 28.5 30 27 V3 Q30 0 27 0 Z M15 6 L22.5 30 H7.5 Z" fill="#ffc62e" />
      </svg>
    ),
  },
  {
    name: 'CFX-Pre',
    running: true,
    active: true,
    icon: <SolverApp size={30} id="pre-task"><PreMark /></SolverApp>,
  },
  {
    name: 'CFX-Solver Manager',
    running: true,
    icon: (
      <SolverApp size={30} id="solver-task">
        <circle cx="10.5" cy="10" r="2.2" stroke="#fff" strokeWidth="1.8" />
        <circle cx="10.5" cy="10" r="3.4" stroke="#fff" strokeWidth="1.4" strokeDasharray="1.4 1.3" />
        <circle cx="18" cy="18" r="3.6" stroke="#fff" strokeWidth="2.6" />
        <circle cx="18" cy="18" r="5.6" stroke="#fff" strokeWidth="2.2" strokeDasharray="2.4 2" />
      </SolverApp>
    ),
  },
  {
    name: 'Mega',
    running: true,
    stacked: true,
    icon: (
      <svg width="30" height="30" viewBox="0 0 30 30" fill="none">
        <circle cx="15" cy="15" r="15" fill="#e20d12" />
        <path d="M4 7 C8 -1 22 -1 26 7 C20 4 10 4 4 7 Z" fill="#f7a9aa" />
        <path d="M6.5 22 V8 L15 16.5 L23.5 8 V22" stroke="#fff" strokeWidth="3.4" />
      </svg>
    ),
  },
  {
    name: 'MATLAB',
    running: true,
    icon: (
      <svg width="29" height="28" viewBox="0 0 29 28" fill="none">
        <path d="M0 15.5 L8 11.5 L14 6 L12 15 L5.5 19.5 Z" fill="#4a8ac4" />
        <path d="M8 11.5 C12 10 15 3 19 .5 L15 19 L10.5 27 L5.5 19.5 Z" fill="#8a2a1c" />
        <path d="M19 .5 C22 4 25 17 28.5 24 C24 20.5 20 19 13 27.5 C13 20 17 12 19 .5 Z" fill="#e8792a" />
        <path d="M19 .5 C18 8 16 14 13 19 L13 27.5 C17 22 19 12 19 .5 Z" fill="#f7b43a" />
      </svg>
    ),
  },
  {
    name: 'Word',
    running: true,
    stacked: true,
    icon: (
      <svg width="28" height="28" viewBox="0 0 28 28" fill="none">
        <rect x="13" y="4" width="14" height="20" fill="#fff" stroke="#2b579a" strokeWidth="1.4" />
        <path d="M15 8 H25 M15 11 H25 M15 14 H25 M15 17 H25 M15 20 H25" stroke="#2b579a" strokeWidth="1.5" />
        <path d="M0 3 L16 0 V28 L0 25 Z" fill="#2b579a" />
        <text x="2" y="19" fontSize="13" fontWeight="700" fontFamily="Open Sans, sans-serif" fill="#fff">W</text>
      </svg>
    ),
  },
];

const trayCell = 'flex h-full w-[30px] items-center justify-center';

const Taskbar = () => (
  <footer className="flex h-[50px] shrink-0 items-stretch bg-linear-to-r from-[#0a0a0a] via-[#212121] to-[#241f20] font-['Open_Sans',sans-serif] text-[#f2f2f2]">
    <button type="button" aria-label="Start" className="flex w-[60px] items-center justify-center">
      <svg width="20" height="20" viewBox="0 0 20 20"><path d="M0 2.6 L8.3 1.4 V9.5 H0 Z M9.3 1.3 L20 0 V9.5 H9.3 Z M0 10.5 H8.3 V18.6 L0 17.4 Z M9.3 10.5 H20 V20 L9.3 18.7 Z" fill="#fff" /></svg>
    </button>
    <button type="button" aria-label="Search" className="flex w-[60px] items-center justify-center">
      <svg width="20" height="20" viewBox="0 0 20 20" fill="none" stroke="#fff" strokeWidth="1.4"><circle cx="13" cy="7" r="6.2" /><path d="M8.5 11.5 L.5 19.5" /></svg>
    </button>
    <button type="button" aria-label="Task View" className="flex w-[60px] items-center justify-center">
      <svg width="20" height="20" viewBox="0 0 20 20" fill="none" stroke="#fff" strokeWidth="1.3">
        <path d="M.7 0 V3 H13 V0 M.7 20 V17 H13 V20 M.7 6 H13 V14 H.7 Z M18.5 0 V5 M18.5 11 V20" />
        <rect x="17.3" y="6.8" width="2.6" height="2.6" fill="#fff" stroke="none" />
      </svg>
    </button>
    <div className="flex pl-[3px]">
      {apps.map((app) => (
        <button
          key={app.name}
          type="button"
          aria-label={app.name}
          className={`flex w-[62px] flex-col items-center ${app.active ? 'bg-[#464646]' : ''}`}
        >
          <span className="flex flex-1 items-center justify-center pt-[3px]">{app.icon}</span>
          <span className={`flex h-[3px] ${app.active ? 'w-full' : 'w-[50px]'}`}>
            {app.running && <span className="h-full flex-1 bg-[#80b4e2]" />}
            {app.stacked && <span className="h-full w-[10px] bg-[#5580a6]" />}
          </span>
        </button>
      ))}
    </div>
    <div className="ml-auto flex items-center">
      <button type="button" aria-label="People" className={`${trayCell} mr-[15px]`}>
        <svg width="18" height="19" viewBox="0 0 18 19" fill="none" stroke="#f2f2f2" strokeWidth="1.5">
          <circle cx="12.5" cy="4" r="3" /><circle cx="5.5" cy="10.5" r="3" />
          <path d="M8.5 9 C10 6.5 16 6.5 17 11.5 M.8 18.5 C1 12.5 10 12.5 10.4 18.5" />
        </svg>
      </button>
      <button type="button" aria-label="Show hidden icons" className={trayCell}>
        <svg width="16" height="9" viewBox="0 0 16 9" fill="none"><path d="M.5 8.5 L8 1 L15.5 8.5" stroke="#f2f2f2" strokeWidth="1.3" /></svg>
      </button>
      <button type="button" aria-label="OneDrive" className={trayCell}>
        <svg width="20" height="13" viewBox="0 0 20 13"><path d="M1.8 10.5 C-.8 8 .8 4.6 3.6 4.6 C4.6 .4 10 -.8 12.2 2.4 C8 2.6 6.4 5 6 6.4 C3.6 7 3 9 3.6 11 Z M5 12.8 C3.8 9.4 5.6 7.4 7.6 7.6 C8.4 3.6 13.6 2.6 15.4 6.6 C19.6 6.2 21 11.4 18.6 12.8 Z" fill="#fff" /></svg>
      </button>
      <button type="button" aria-label="Battery" className={trayCell}>
        <svg width="20" height="14" viewBox="0 0 20 14" fill="none" stroke="#f2f2f2">
          <path d="M6 2.5 H18 V12.5 H4.5 V8 M18.7 5.5 V9.5 M3 5 V9.5 H4.5 M1.5 .5 V3 M4.5 .5 V3 M.5 3 H5.5 V5 H.5 Z" />
          <rect x="6.5" y="5" width="6" height="5.5" fill="#fff" stroke="none" />
        </svg>
      </button>
      <button type="button" aria-label="Volume" className={trayCell}>
        <svg width="21" height="17" viewBox="0 0 21 17" fill="none" stroke="#f2f2f2" strokeWidth="1.1">
          <path d="M.8 5.8 H4 L8 2 V15 L4 11.2 H.8 Z M10.5 6 C11.8 7.2 11.8 9.8 10.5 11" />
          <path d="M13.3 3.8 C16 6.4 16 10.6 13.3 13.2 M16.4 1.4 C20.6 5 20.6 12 16.4 15.6" stroke="#7c7c7c" />
        </svg>
      </button>
      <button type="button" aria-label="Network" className={trayCell}>
        <svg width="16" height="16" viewBox="0 0 16 16" fill="none" strokeWidth="1.3">
          <path d="M.7 16 C.7 7 7 .7 16 .7 M4 16 C4 9 9 4 16 4" stroke="#b8b8b8" />
          <path d="M7.4 16 C7.4 11 11 7.4 16 7.4 M10.6 16 C10.6 12.8 12.8 10.6 16 10.6" stroke="#f2f2f2" />
          <circle cx="14.4" cy="14.4" r="1.5" fill="#fff" />
        </svg>
      </button>
      <button type="button" className="w-[44px] text-center text-[14px]">NLD</button>
      <button type="button" className="flex w-[86px] flex-col items-center text-[14px] leading-[23px]">
        <span>2:41 PM</span>
        <span>06-Dec-18</span>
      </button>
      <button type="button" aria-label="5 new notifications" className="flex h-full w-[60px] items-center justify-center pt-[5px]">
        <svg width="30" height="30" viewBox="0 0 30 30" fill="none">
          <path d="M0 0 H20 V16 H9 V19 L6 16 H0 Z" fill="#fff" />
          <path d="M3.5 4.5 H16.5 M3.5 8 H16.5 M3.5 11.5 H12" stroke="#241f20" strokeWidth="1.2" />
          <circle cx="19.5" cy="19.5" r="9.6" fill="#3d3a3b" stroke="#8a8888" />
          <text x="19.5" y="24.5" fontSize="14" fontWeight="700" textAnchor="middle" fontFamily="Open Sans, sans-serif" fill="#fff">5</text>
        </svg>
      </button>
      <button type="button" aria-label="Show desktop" className="h-[50px] w-[6px] border-l border-[#6d6a6b]" />
    </div>
  </footer>
);

/* ---------- window ---------- */

const menus = ['File', 'Edit', 'Session', 'Insert', 'Tools', 'Help'];

const TitleBar = () => (
  <header className="flex h-[28px] shrink-0 items-center bg-white pl-[2px] text-black">
    <SolverApp size={20} id="pre-title"><PreMark /></SolverApp>
    <h1 className="ml-[5px] font-['Open_Sans',sans-serif] text-[15px] leading-[20px]">B4 : Fluid Flow (CFX) - CFX-Pre</h1>
    <div className="ml-auto flex h-full pr-[4px]">
      <button type="button" aria-label="Minimize" className="flex w-[58px] items-center justify-center">
        <svg width="12" height="12" viewBox="0 0 12 12"><path d="M0 6.5 H12" stroke="#000" /></svg>
      </button>
      <button type="button" aria-label="Restore" className="flex w-[58px] items-center justify-center">
        <svg width="13" height="13" viewBox="0 0 13 13" fill="none"><path d="M.5 3.5 H9.5 V12.5 H.5 Z M3.5 3.5 V.5 H12.5 V9.5 H9.5" stroke="#000" /></svg>
      </button>
      <button type="button" aria-label="Close" className="flex w-[58px] items-center justify-center">
        <svg width="13" height="13" viewBox="0 0 13 13"><path d="M.5 .5 L12.5 12.5 M12.5 .5 L.5 12.5" stroke="#000" strokeWidth="1.2" /></svg>
      </button>
    </div>
  </header>
);

const App: React.FC = () => (
  <div className="flex h-screen min-h-[800px] flex-col overflow-hidden bg-[#f0f0f0] font-['Roboto',sans-serif] text-[13px] text-black">
    <TitleBar />
    <nav className="flex h-[22px] shrink-0 items-center bg-white pt-px pl-px">
      {menus.map((menu) => (
        <button key={menu} type="button" className="px-[7px] leading-[18px]">{menu}</button>
      ))}
    </nav>
    <div className="flex h-[28px] shrink-0 border-b border-[#b0b0b0]">
      <Toolbar label="File" tools={fileTools} />
      <Toolbar label="Insert" tools={insertTools} />
      <Toolbar label="Physics" tools={physicsTools} />
      <Grip />
    </div>

    <main className="flex min-h-0 flex-1 pt-[6px]">
      <section className="flex w-[35%] shrink-0 flex-col pr-[4px] pb-[31px] pl-[8px]">
        <div role="tablist" className="flex h-[25px]">
          <button type="button" role="tab" aria-selected="true" className="w-[67px] border border-b-0 border-[#dadada] bg-white text-center">
            Outline
          </button>
        </div>
        <div className="min-h-0 flex-1 overflow-hidden border border-[#828282] bg-white">
          <ul>
            {items.map((item, i) => <TreeRow key={i} item={item} id={`tree-${i}`} />)}
          </ul>
        </div>
      </section>

      <section className="flex min-w-0 flex-1 flex-col pr-[6px] pb-[27px] pl-[6px]">
        <div className="flex h-[26px] shrink-0 border-t border-white">
          <Toolbar label="Selection" tools={selectTools} />
          <Toolbar label="View" tools={viewTools} />
          <div className="flex">
            <Grip />
            <button type="button" aria-label="What's This?" className="flex w-[23px] items-center justify-center">
              <WhatsThis />
            </button>
          </div>
        </div>
        <button type="button" className="flex h-[21px] shrink-0 items-center gap-[10px] bg-[#c0c0c0] pl-[7px] font-['Noto_Sans',sans-serif] font-bold">
          View 1
          <Caret />
        </button>
        <Viewport />
        <div className="mt-[6px] h-[207px] shrink-0 border border-[#828282] bg-white">
          <p className="flex items-center gap-[7px] pt-[2px] pl-[6px] leading-[18px] text-[#1414a8]">
            <svg width="13" height="13" viewBox="0 0 13 13" fill="none" className="shrink-0">
              <path d="M6.5 .8 L12.4 12 H.6 Z" fill="#ffe91a" stroke="#5c5410" />
              <path d="M6.5 4 V8.3 M6.5 9.4 V11" stroke="#000" strokeWidth="1.5" />
            </svg>
            In Analysis 'Flow Analysis 1' - Output Control: No intermediate transient results files have been defined.
          </p>
        </div>
      </section>
    </main>

    <Taskbar />
  </div>
);

export default App;
